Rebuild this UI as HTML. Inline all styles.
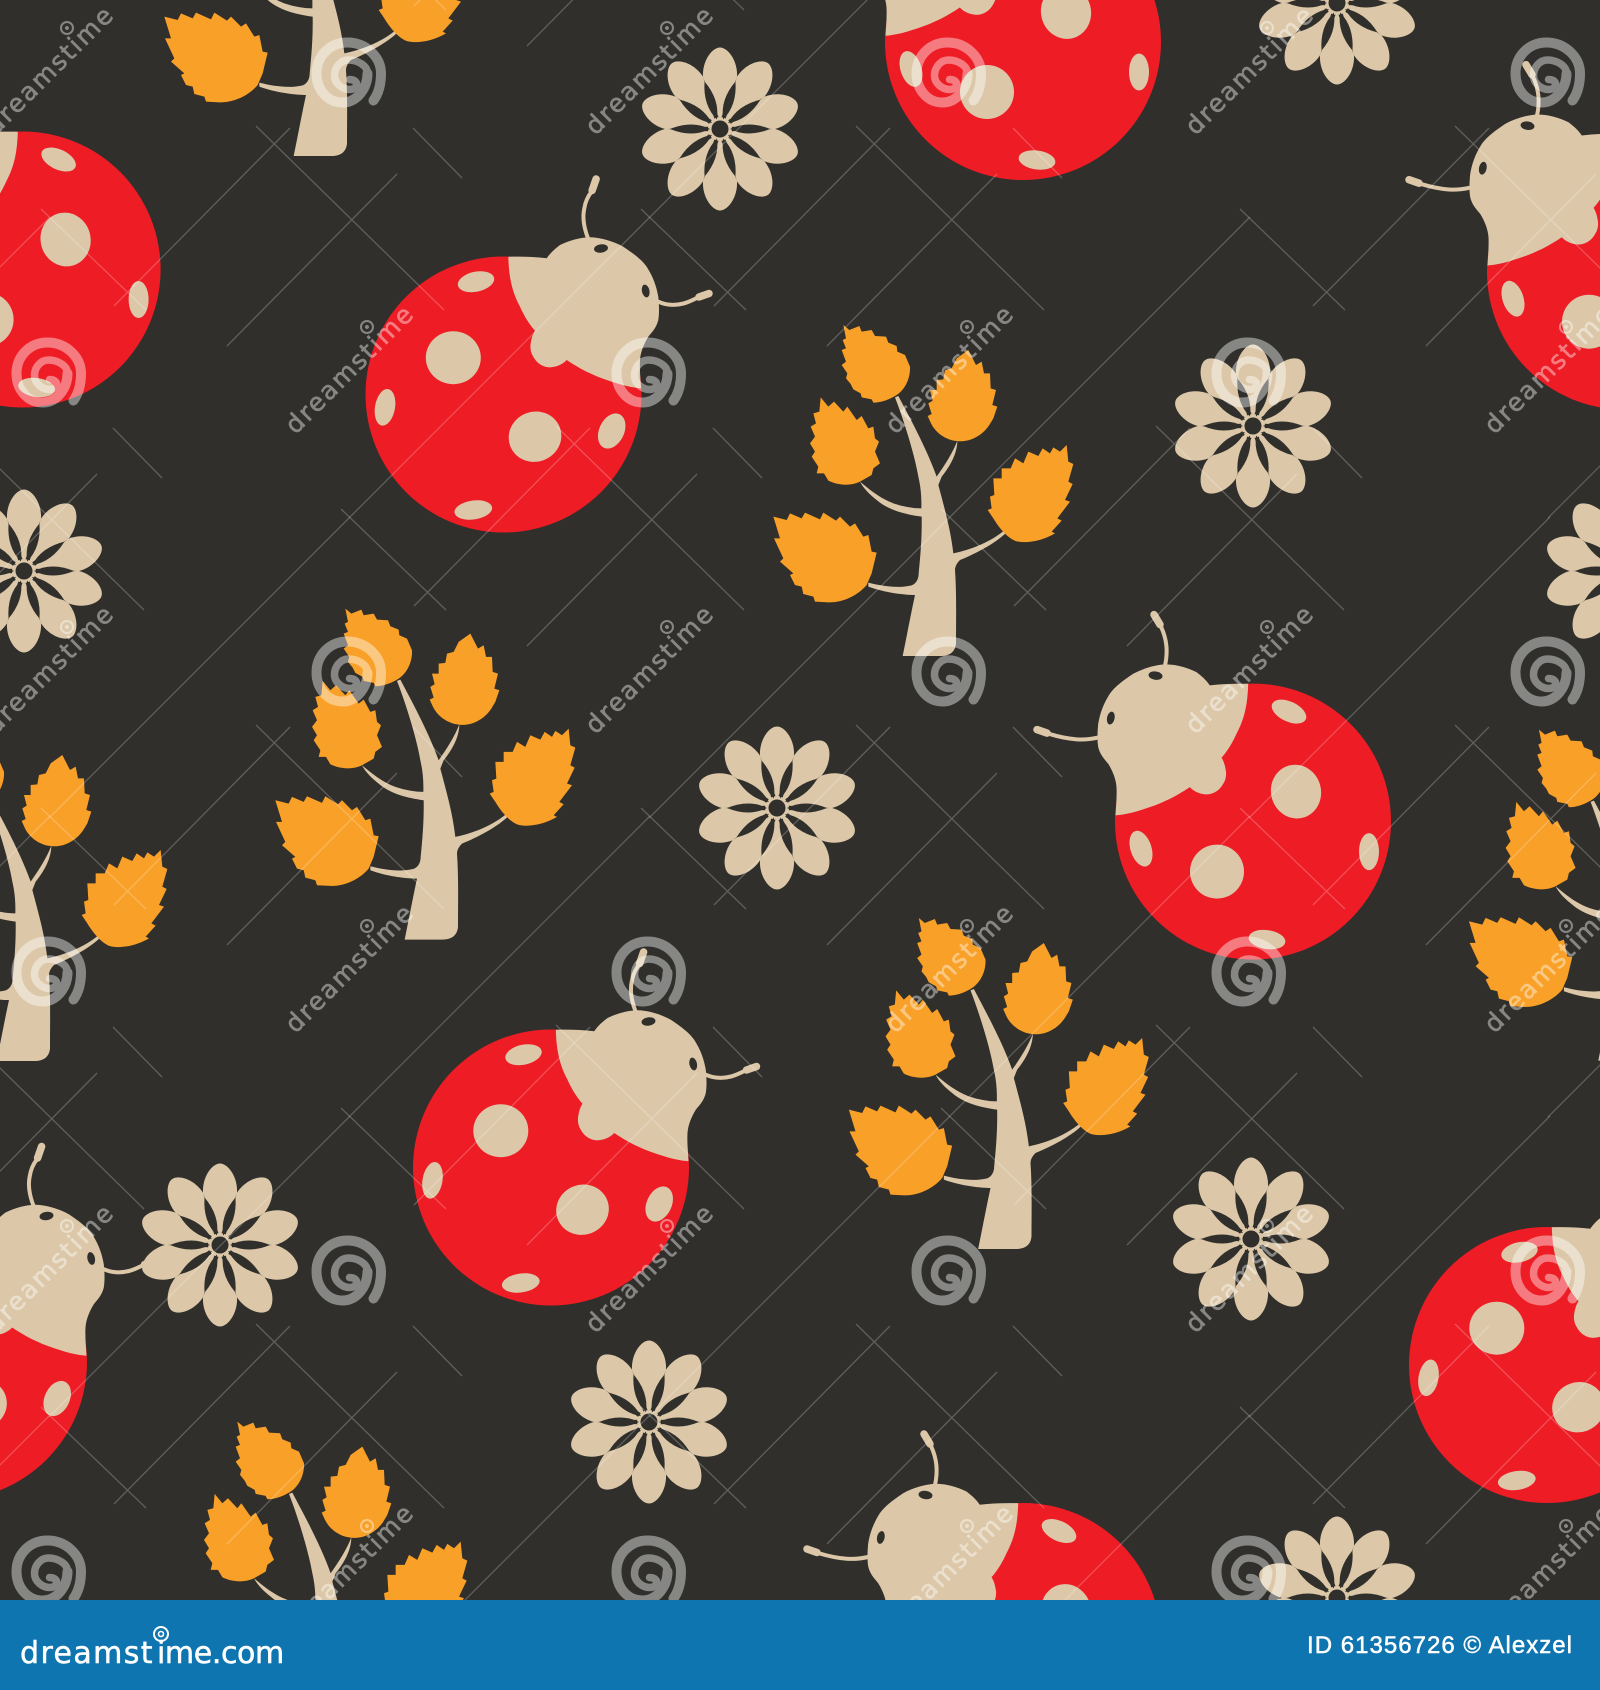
<!DOCTYPE html>
<html lang="en">
<head>
<meta charset="utf-8">
<title>Ladybug pattern</title>
<style>
html,body{margin:0;padding:0;background:#302f2b;width:1600px;height:1690px;overflow:hidden;}
svg{display:block;}
</style>
</head>
<body>
<svg xmlns="http://www.w3.org/2000/svg" width="1600" height="1690" viewBox="0 0 1600 1690">
<defs>
  <g id="bugbase">
    <circle r="138" fill="#ee1c25"/>
    <path fill="#dcc8a9" d="M4.8,-137.8 C18,-138 30,-138 43.2,-136.2 C47,-142 52,-146 56.5,-149.5 C66,-154 76,-157 86.5,-157.2 C98,-157 110,-153 119.8,-147.8 C130,-141 138,-135 143.2,-127.8 C150,-117 153,-108 154.8,-97.8 C155.5,-90 156,-82 154.8,-74.5 C153,-67 149,-63 144.8,-57.8 C140,-50 137,-42 136.5,-34.5 C136,-25 137,-15 137.5,-6.2 C128,-7 120,-9 113.2,-11.2 C104,-14 95,-17 86.5,-21.2 C78,-25 70,-30 63.2,-34.5 C58,-29 51,-27 44.8,-27.2 C38,-28 33,-32 29.8,-37.8 C27,-42 26.5,-47 27.2,-51.2 C28,-56 29,-60 31.5,-63.8 C25,-71 20,-80 16.5,-87.8 C11,-98 8,-108 6.5,-117.8 C5.5,-124 5,-131 4.8,-137.8Z"/>
    <ellipse cx="97.5" cy="-146" rx="7" ry="4.2" fill="#302f2b" transform="rotate(-8 97.5 -146)"/>
    <ellipse cx="142.2" cy="-103.5" rx="3.8" ry="6.5" fill="#302f2b" transform="rotate(-12 142.2 -103.5)"/>
  </g>
  <g id="bugA">
    <use href="#bugbase"/>
    <path fill="none" stroke="#dcc8a9" stroke-width="4" stroke-linecap="round" d="M84.5,-156.2 C80,-168 79,-178 80.8,-186 C82,-194 85,-199 88.2,-203"/>
    <path fill="none" stroke="#dcc8a9" stroke-width="7.5" stroke-linecap="round" d="M88.6,-204 L92.6,-215.5"/>
    <path fill="none" stroke="#dcc8a9" stroke-width="4" stroke-linecap="round" d="M154.8,-92.8 C163,-89 172,-89 180,-91 C186,-92.5 190,-95 195,-97.2"/>
    <path fill="none" stroke="#dcc8a9" stroke-width="7.5" stroke-linecap="round" d="M195.5,-97.5 L205.5,-101"/>
    <g fill="#dcc8a9">
      <ellipse cx="-27.5" cy="-112.8" rx="18.5" ry="10" transform="rotate(-12 -27.5 -112.8)"/>
      <ellipse cx="-50.2" cy="-36.8" rx="27.5" ry="26.5"/>
      <ellipse cx="-118.5" cy="12.8" rx="10" ry="18.5" transform="rotate(10 -118.5 12.8)"/>
      <ellipse cx="31.5" cy="42.2" rx="26.5" ry="25" transform="rotate(-20 31.5 42.2)"/>
      <ellipse cx="108.2" cy="36.5" rx="12.5" ry="18.5" transform="rotate(25 108.2 36.5)"/>
      <ellipse cx="-30.2" cy="115.5" rx="19" ry="9.5" transform="rotate(-8 -30.2 115.5)"/>
    </g>
  </g>
  <g id="bugD">
    <use href="#bugbase" transform="scale(-1,1)"/>
    <path fill="none" stroke="#dcc8a9" stroke-width="4" stroke-linecap="round" d="M-88,-156 C-85,-170 -86,-182 -92,-195"/>
    <path fill="none" stroke="#dcc8a9" stroke-width="7.5" stroke-linecap="round" d="M-93,-197 L-99,-207"/>
    <path fill="none" stroke="#dcc8a9" stroke-width="4" stroke-linecap="round" d="M-155,-84 C-168,-81 -182,-81 -205,-88"/>
    <path fill="none" stroke="#dcc8a9" stroke-width="7.5" stroke-linecap="round" d="M-206,-88.5 L-216,-92"/>
    <g fill="#dcc8a9">
      <ellipse cx="43" cy="-30" rx="25" ry="27" transform="rotate(-15 43 -30)"/>
      <ellipse cx="-36" cy="50" rx="27" ry="27"/>
      <ellipse cx="116" cy="30" rx="10" ry="18.5"/>
      <ellipse cx="36" cy="-110" rx="18.5" ry="10" transform="rotate(25 36 -110)"/>
      <ellipse cx="14" cy="118" rx="18.5" ry="9.5" transform="rotate(8 14 118)"/>
      <ellipse cx="-112" cy="27" rx="10.5" ry="18.5" transform="rotate(-18 -112 27)"/>
    </g>
  </g>

  <g id="tree">
    <g transform="scale(.33333)">
      <path fill="#dcc8a9" d="M428,1038 C440,980 450,925 465,855 C440,855 380,850 325,830 L325,818 C370,830 420,835 455,826 C470,820 476,805 476,790 C482,730 486,680 485,620 C450,615 390,605 350,570 C330,555 310,535 300,515 C330,540 360,565 400,580 C430,590 460,595 484,595 C485,560 482,530 475,500 C465,440 435,340 405,262 L415,258 C445,315 500,415 530,500 C555,465 580,425 592,392 C592,430 570,470 545,500 L535,525 C555,600 572,660 580,730 C630,720 700,695 748,648 L750,655 C725,690 650,730 600,750 C590,760 585,770 585,780 C590,850 588,930 588,1000 C586,1025 570,1038 540,1038 Z"/>
      <g fill="#f9a028">
        <path d="M250,45 L268,60 L298,48 L305,65 L335,60 L345,78 L378,80 L385,98 L410,108 L412,125 L435,135 L450,170 C452,210 430,245 405,258 C385,270 360,278 340,278 L335,268 L305,262 L302,250 L280,238 L272,222 L258,205 L262,190 L245,165 L258,155 L245,120 L258,115 L248,90 L258,85 Z"/>
        <path d="M625,120 L648,165 L665,155 L672,190 L690,190 L692,235 L708,240 L697,285 L712,290 L700,325 L688,345 C665,380 625,398 590,393 C555,390 525,365 513,340 L503,318 L515,312 L505,280 L518,272 L510,240 L530,240 L530,210 L550,208 L555,180 L575,175 L590,145 Z"/>
        <path d="M182,262 L205,290 L222,275 L250,305 L262,290 L290,330 L305,318 L325,355 L340,350 L345,385 L357,395 L345,425 L360,460 L340,475 L335,495 L300,515 C270,530 230,525 205,512 L192,490 L170,490 L175,470 L155,440 L165,425 L150,400 L165,380 L152,350 L168,340 L160,310 L178,305 Z"/>
        <path d="M40,620 L80,630 L90,610 L125,625 L135,608 L180,628 L190,608 L228,632 L240,620 L270,650 L285,640 L310,680 L325,675 L335,725 L350,728 L335,790 L320,825 C290,860 245,878 205,877 L165,875 L160,860 L130,852 L125,830 L105,825 L90,795 L100,790 L60,755 L70,745 L42,685 L60,685 Z"/>
        <path d="M920,405 L925,455 L940,462 L925,515 L938,522 L915,570 L930,575 L892,625 L905,632 L875,665 L885,670 C850,690 810,700 775,695 C745,690 715,650 700,625 L683,600 L695,595 L690,560 L703,555 L700,505 L725,505 L725,475 L752,475 L765,445 L790,460 L805,425 L835,438 L848,415 L870,430 L880,412 L900,425 Z"/>
      </g>
    </g>
  </g>

  <path id="petal" d="M0,-8 L-17,-52 C-18,-68 -8,-81.5 0,-81.5 C8,-81.5 18,-68 17,-52 L0,-8Z"/>
  <path id="lens" d="M0,-10 Q-9,-28 0,-50 Q9,-28 0,-10Z"/>
  <g id="flower" fill="#dcc8a9">
    <circle r="12"/>
    <use href="#petal"/>
    <use href="#petal" transform="rotate(36)"/>
    <use href="#petal" transform="rotate(72)"/>
    <use href="#petal" transform="rotate(108)"/>
    <use href="#petal" transform="rotate(144)"/>
    <use href="#petal" transform="rotate(180)"/>
    <use href="#petal" transform="rotate(216)"/>
    <use href="#petal" transform="rotate(252)"/>
    <use href="#petal" transform="rotate(288)"/>
    <use href="#petal" transform="rotate(324)"/>
    <g fill="#302f2b">
      <use href="#lens" transform="rotate(18)"/>
      <use href="#lens" transform="rotate(54)"/>
      <use href="#lens" transform="rotate(90)"/>
      <use href="#lens" transform="rotate(126)"/>
      <use href="#lens" transform="rotate(162)"/>
      <use href="#lens" transform="rotate(198)"/>
      <use href="#lens" transform="rotate(234)"/>
      <use href="#lens" transform="rotate(270)"/>
      <use href="#lens" transform="rotate(306)"/>
      <use href="#lens" transform="rotate(342)"/>
      <circle r="8.5"/>
    </g>
  </g>

  <g id="wm">
    <g transform="translate(-2.5,1.5)">
      <path fill="none" stroke="#fff" stroke-width="10" stroke-linecap="round" d="M26,27 C31,20 33.5,10 33.5,0 C33.5,-17 18,-31 0,-31 C-18,-31 -31,-17 -31,0 C-31,16 -20,29 -5,29 C10,29 20,14 20,0"/>
      <path fill="none" stroke="#fff" stroke-width="7.5" stroke-linecap="round" d="M20,0 C20,-8 10,-13.5 1,-13.5 C-7,-13.5 -13,-6 -13,2 C-13,10 -5,16 2,16 C8,16 11,11 8,8 C6,6 4,6 2,6"/>
    </g>
    <g transform="translate(0,-303) rotate(-45)">
      <text x="-86" y="9" font-family="'DejaVu Sans',sans-serif" font-size="25" letter-spacing="2" fill="#fff" stroke="#fff" stroke-width=".6">dreamstime</text>
      <circle cx="41" cy="-17" r="6" fill="none" stroke="#fff" stroke-width="2"/>
      <circle cx="41" cy="-17" r="2" fill="#fff"/>
    </g>
    <g stroke="#fff" stroke-width="1.3" opacity=".55">
      <line x1="-236" y1="234" x2="-60" y2="56"/>
      <line x1="-123" y1="274" x2="47" y2="102"/>
      <line x1="-1" y1="446" x2="300" y2="145"/>
      <line x1="-94" y1="54" x2="94" y2="238"/>
      <line x1="-309" y1="137" x2="-204" y2="238"/>
      <line x1="63" y1="56" x2="112" y2="106"/>
    </g>
  </g>
</defs>

<rect width="1600" height="1690" fill="#302f2b"/>

<!-- flowers -->
<use href="#flower" transform="translate(720,129)"/>
<use href="#flower" transform="translate(1253,426)"/>
<use href="#flower" transform="translate(24,571)"/>
<use href="#flower" transform="translate(777,808)"/>
<use href="#flower" transform="translate(220,1245)"/>
<use href="#flower" transform="translate(1251,1239)"/>
<use href="#flower" transform="translate(649,1422)"/>
<use href="#flower" transform="translate(1337,3)"/>
<use href="#flower" transform="translate(1625,571)"/>
<use href="#flower" transform="translate(1337,1598)"/>

<!-- trees -->
<use href="#tree" transform="translate(760,310)"/>
<use href="#tree" transform="translate(262,593.6)"/>
<use href="#tree" transform="translate(835.5,903)"/>
<use href="#tree" transform="translate(151,-190)"/>
<use href="#tree" transform="translate(-146,715)"/>
<use href="#tree" transform="translate(1455.6,714.6)"/>
<use href="#tree" transform="translate(154,1406.6)"/>

<!-- ladybugs -->
<use href="#bugA" transform="translate(503.5,394.5)"/>
<use href="#bugA" transform="translate(551,1167.5)"/>
<use href="#bugA" transform="translate(1547,1365)"/>
<use href="#bugA" transform="translate(-51,1362)"/>
<use href="#bugD" transform="translate(1253,821.6)"/>
<use href="#bugD" transform="translate(1023,42)"/>
<use href="#bugD" transform="translate(22.6,269.5)"/>
<use href="#bugD" transform="translate(1625,271.7)"/>
<use href="#bugD" transform="translate(1023,1641)"/>

<!-- watermark -->
<g opacity=".42">
  <use href="#wm" x="-250" y="72"/><use href="#wm" x="-250" y="671"/><use href="#wm" x="-250" y="1270"/><use href="#wm" x="-250" y="1870"/>
  <use href="#wm" x="50" y="372"/><use href="#wm" x="50" y="971"/><use href="#wm" x="50" y="1570"/>
  <use href="#wm" x="350" y="72"/><use href="#wm" x="350" y="671"/><use href="#wm" x="350" y="1270"/><use href="#wm" x="350" y="1870"/>
  <use href="#wm" x="650" y="372"/><use href="#wm" x="650" y="971"/><use href="#wm" x="650" y="1570"/>
  <use href="#wm" x="950" y="72"/><use href="#wm" x="950" y="671"/><use href="#wm" x="950" y="1270"/><use href="#wm" x="950" y="1870"/>
  <use href="#wm" x="1250" y="372"/><use href="#wm" x="1250" y="971"/><use href="#wm" x="1250" y="1570"/>
  <use href="#wm" x="1549" y="72"/><use href="#wm" x="1549" y="671"/><use href="#wm" x="1549" y="1270"/><use href="#wm" x="1549" y="1870"/>
  <use href="#wm" x="650" y="-228"/><use href="#wm" x="950" y="-528"/>
</g>

<!-- footer -->
<rect x="0" y="1600" width="1600" height="90" fill="#0f75b0"/>
<text x="20" y="1663" font-family="'DejaVu Sans',sans-serif" font-size="30" fill="#fff" stroke="#fff" stroke-width=".5"><tspan letter-spacing="1.4">dreamst</tspan><tspan x="157" letter-spacing="-.4">ime.com</tspan></text>
<circle cx="161" cy="1634" r="7" fill="none" stroke="#fff" stroke-width="2"/>
<circle cx="161" cy="1634" r="2.5" fill="none" stroke="#fff" stroke-width="1.6"/>
<text x="1307" y="1653" textLength="265" lengthAdjust="spacing" font-family="'Liberation Sans',sans-serif" font-size="24" fill="#fff" stroke="#fff" stroke-width=".5">ID 61356726 © Alexzel</text>
</svg>
</body>
</html>
